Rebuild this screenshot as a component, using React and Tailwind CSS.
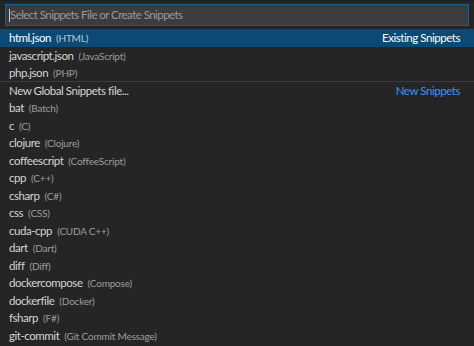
import React from 'react';

const items = [
  { label: 'html.json', desc: 'HTML', selected: true, right: 'Existing Snippets' },
  { label: 'javascript.json', desc: 'JavaScript' },
  { label: 'php.json', desc: 'PHP', last: true },
  { label: 'New Global Snippets file...', rightBlue: 'New Snippets' },
  { label: 'bat', desc: 'Batch' },
  { label: 'c', desc: 'C' },
  { label: 'clojure', desc: 'Clojure' },
  { label: 'coffeescript', desc: 'CoffeeScript' },
  { label: 'cpp', desc: 'C++' },
  { label: 'csharp', desc: 'C#' },
  { label: 'css', desc: 'CSS' },
  { label: 'cuda-cpp', desc: 'CUDA C++' },
  { label: 'dart', desc: 'Dart' },
  { label: 'diff', desc: 'Diff' },
  { label: 'dockercompose', desc: 'Compose' },
  { label: 'dockerfile', desc: 'Docker' },
  { label: 'fsharp', desc: 'F#' },
  { label: 'git-commit', desc: 'Git Commit Message' },
];

const App = () => {
  return (
    <div
      className="w-[474px] h-[346px] overflow-hidden bg-[#252526] border-t border-[#1e1e1e]"
      style={{ fontFamily: 'Lato, "Open Sans", sans-serif' }}
    >
      {/* Search box */}
      <div className="px-[5px] pt-[3px] pb-[3px]">
        <div className="h-[22px] border border-[#0e639c] bg-[#3c3c3c] flex items-center pl-[3px]">
          <span className="w-px h-[13px] bg-[#cccccc]" />
          <span className="text-[11.5px] tracking-[-0.55px] text-[#9a9a9a]">Select Snippets File or Create Snippets</span>
        </div>
      </div>

      {/* List */}
      <div className="flex flex-col">
        {items.map((it) => (
          <div
            key={it.label}
            className={`h-[17.5px] flex items-center justify-between pl-[9px] pr-[14px] ${
              it.selected ? 'bg-[#0b4a75]' : ''
            } ${it.last ? 'border-b border-[#3c3c3c]' : ''}`}
          >
            <div className="flex items-baseline gap-[5px] whitespace-nowrap">
              <span className={`text-[11.5px] tracking-[-0.45px] ${it.selected ? 'text-white' : 'text-[#d4d4d4]'}`}>{it.label}</span>
              {it.desc && (
                <span className={`text-[10px] tracking-[-0.2px] ${it.selected ? 'text-[#b9c9d8]' : 'text-[#9d9d9d]'}`}>({it.desc})</span>
              )}
            </div>
            {it.right && <span className="text-[11.5px] tracking-[-0.45px] text-white">{it.right}</span>}
            {it.rightBlue && <span className="text-[11.5px] tracking-[-0.45px] text-[#3794ff]">{it.rightBlue}</span>}
          </div>
        ))}
      </div>
    </div>
  );
};

export default App;
